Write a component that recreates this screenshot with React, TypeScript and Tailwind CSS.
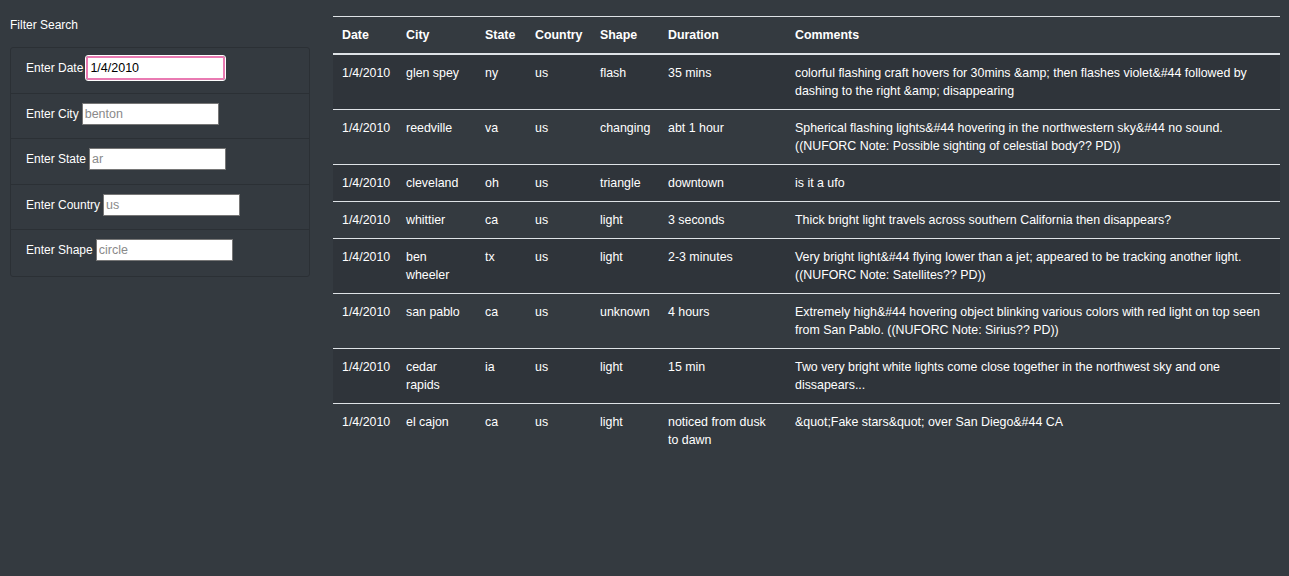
import React from 'react';

type Sighting = {
  date: string;
  city: string;
  state: string;
  country: string;
  shape: string;
  duration: string;
  comments: string;
};

const rows: Sighting[] = [
  { date: '1/4/2010', city: 'glen spey', state: 'ny', country: 'us', shape: 'flash', duration: '35 mins', comments: 'colorful flashing craft hovers for 30mins &amp; then flashes violet&#44 followed by dashing to the right &amp; disappearing' },
  { date: '1/4/2010', city: 'reedville', state: 'va', country: 'us', shape: 'changing', duration: 'abt 1 hour', comments: 'Spherical flashing lights&#44 hovering in the northwestern sky&#44 no sound. ((NUFORC Note: Possible sighting of celestial body?? PD))' },
  { date: '1/4/2010', city: 'cleveland', state: 'oh', country: 'us', shape: 'triangle', duration: 'downtown', comments: 'is it a ufo' },
  { date: '1/4/2010', city: 'whittier', state: 'ca', country: 'us', shape: 'light', duration: '3 seconds', comments: 'Thick bright light travels across southern California then disappears?' },
  { date: '1/4/2010', city: 'ben wheeler', state: 'tx', country: 'us', shape: 'light', duration: '2-3 minutes', comments: 'Very bright light&#44 flying lower than a jet; appeared to be tracking another light. ((NUFORC Note: Satellites?? PD))' },
  { date: '1/4/2010', city: 'san pablo', state: 'ca', country: 'us', shape: 'unknown', duration: '4 hours', comments: 'Extremely high&#44 hovering object blinking various colors with red light on top seen from San Pablo. ((NUFORC Note: Sirius?? PD))' },
  { date: '1/4/2010', city: 'cedar rapids', state: 'ia', country: 'us', shape: 'light', duration: '15 min', comments: 'Two very bright white lights come close together in the northwest sky and one dissapears...' },
  { date: '1/4/2010', city: 'el cajon', state: 'ca', country: 'us', shape: 'light', duration: 'noticed from dusk to dawn', comments: '&quot;Fake stars&quot; over San Diego&#44 CA' },
];

const filters = [
  { label: 'Enter Date', placeholder: '1/4/2010', value: '1/4/2010', focused: true },
  { label: 'Enter City', placeholder: 'benton' },
  { label: 'Enter State', placeholder: 'ar' },
  { label: 'Enter Country', placeholder: 'us' },
  { label: 'Enter Shape', placeholder: 'circle' },
];

const cell = 'px-[9px] py-[9px] align-top border-t border-[#dee2e6]';

export default function App() {
  return (
    <div
      className="min-h-screen bg-[#343a40] text-white flex text-[12px] leading-[18px]"
      style={{ fontFamily: '"Liberation Sans", Arial, sans-serif' }}
    >
      {/* filter sidebar */}
      <aside className="w-[322px] shrink-0 pl-[10px] pr-[12px] pt-[16px]">
        <h5 className="text-[12px] leading-[18px] mb-[13px]">Filter Search</h5>
        <ul className="border border-[#2b3035] rounded-[3px]">
          {filters.map((f, i) => (
            <li
              key={f.label}
              className={`h-[45.5px] pl-[15px] pt-[8px] ${i < filters.length - 1 ? 'border-b border-[#2b3035]' : ''}`}
            >
              <div className="flex items-center h-[24px]">
                <label className="mr-[3px] whitespace-nowrap">{f.label}</label>
                {f.focused ? (
                  <input
                    defaultValue={f.value}
                    className="w-[139px] h-[24px] px-[2px] bg-white text-black text-[12.5px] border-2 border-[#e97ab2] rounded-[2px] outline outline-1 outline-white"
                  />
                ) : (
                  <input
                    placeholder={f.placeholder}
                    className="w-[137px] h-[22px] px-[2px] bg-white text-black text-[12.5px] border border-[#767676] placeholder:text-[#8a8a8a] outline-none"
                  />
                )}
              </div>
            </li>
          ))}
        </ul>
      </aside>

      {/* results table */}
      <main className="flex-1 pl-[11px] pr-[9px] pt-[16px]">
        <table className="w-full table-fixed border-collapse text-[12.4px]">
          <colgroup>
            <col className="w-[64px]" />
            <col className="w-[79px]" />
            <col className="w-[50px]" />
            <col className="w-[65px]" />
            <col className="w-[68px]" />
            <col className="w-[127px]" />
            <col />
          </colgroup>
          <thead>
            <tr>
              {['Date', 'City', 'State', 'Country', 'Shape', 'Duration', 'Comments'].map((h) => (
                <th
                  key={h}
                  className="text-left font-bold px-[9px] py-[9px] border-t border-b-2 border-[#dee2e6] align-bottom"
                >
                  {h}
                </th>
              ))}
            </tr>
          </thead>
          <tbody>
            {rows.map((r, i) => (
              <tr key={i} className={i % 2 === 0 ? 'bg-[#2f343a]' : ''}>
                <td className={cell}>{r.date}</td>
                <td className={cell}>{r.city}</td>
                <td className={cell}>{r.state}</td>
                <td className={cell}>{r.country}</td>
                <td className={cell}>{r.shape}</td>
                <td className={cell}>{r.duration}</td>
                <td className={cell}>{r.comments}</td>
              </tr>
            ))}
          </tbody>
        </table>
      </main>
    </div>
  );
}
